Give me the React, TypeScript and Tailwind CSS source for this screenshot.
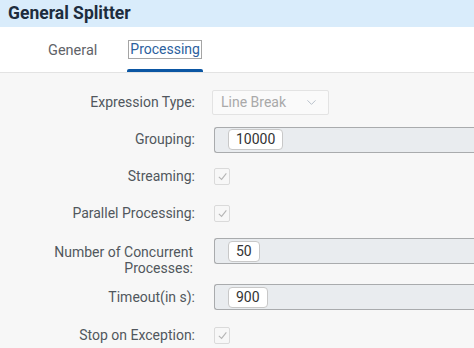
import { ChevronDown } from "lucide-react";

const font = { fontFamily: "Roboto, 'Noto Sans', sans-serif" };

function Check() {
  return (
    <div className="ml-[1px] flex h-[17px] w-[16px] items-center justify-center rounded-[2px] border border-[#dadada] bg-[#f7f7f7]">
      <svg viewBox="0 0 12 12" className="h-[11px] w-[11px]" fill="none" stroke="#b5b5b5" strokeWidth="1.2">
        <path d="M2 6.5 L5 9.2 L10.2 2.5" />
      </svg>
    </div>
  );
}

function Field({ value }: { value: string }) {
  return (
    <div className="ml-[1px] flex h-[26px] flex-1 items-center rounded-l-[3px] border border-r-0 border-[#a9abad] bg-[#e9ecef] pl-[13px]">
      <span className="rounded-[4px] border border-[#c8c8c8] bg-white px-[7px] text-[14px] leading-[19px] text-[#333]">
        {value}
      </span>
    </div>
  );
}

function Row({ label, children, h = "h-[37px]" }: { label: string; children: React.ReactNode; h?: string }) {
  return (
    <div className={`flex ${h} items-center`}>
      <div className="w-[196px] shrink-0 pr-[1px] text-right text-[14px] text-[#51575d]">{label}</div>
      <div className="ml-[17px] flex flex-1 items-center">{children}</div>
    </div>
  );
}

export default function App() {
  return (
    <div className="h-[348px] w-[474px] overflow-hidden bg-[#f7f7f7]" style={font}>
      <div className="flex h-[27px] items-center bg-[#d9ecfb] pl-[8px]">
        <h1 className="text-[17.5px] font-bold text-[#1d2d3e]">General Splitter</h1>
      </div>

      <div className="flex h-[46px] items-end border-b border-[#e3e3e3] bg-white">
        <div className="ml-[48px] flex h-full items-center pt-[2px] text-[14.5px] text-[#5f6368]">General</div>
        <div className="relative ml-[30px] flex h-full items-center px-[1px]">
          <span className="border border-[#a5a5a5] px-[1px] text-[14px] leading-[17px] text-[#2c5f9e]">Processing</span>
          <div className="absolute bottom-0 left-0 right-0 h-[3px] rounded-t-[2px] bg-[#0b56a3]" />
        </div>
      </div>

      <div className="pt-[11px]">
        <Row label="Expression Type:">
          <div className="-ml-[1px] flex h-[25px] w-[117px] items-center justify-between rounded-[2px] border border-[#e3e3e3] bg-[#fafafa] pl-[8px] pr-[9px] text-[14px] text-[#a9a9a9]">
            <span>Line Break</span>
            <ChevronDown className="h-[15px] w-[15px]" strokeWidth={1.3} color="#a9b4c0" />
          </div>
        </Row>
        <Row label="Grouping:">
          <Field value="10000" />
        </Row>
        <Row label="Streaming:">
          <Check />
        </Row>
        <Row label="Parallel Processing:">
          <Check />
        </Row>
        <div className="flex h-[46px] items-start">
          <div className="w-[196px] shrink-0 pr-[3px] pt-[12px] text-right text-[14px] leading-[16px] text-[#51575d]">
            Number of Concurrent
            <br />
            Processes:
          </div>
          <div className="ml-[17px] flex flex-1 pt-[6px]">
            <Field value="50" />
          </div>
        </div>
        <Row label="Timeout(in s):" h="h-[38px]">
          <Field value="900" />
        </Row>
        <Row label="Stop on Exception:" h="h-[38px]">
          <Check />
        </Row>
      </div>
    </div>
  );
}
